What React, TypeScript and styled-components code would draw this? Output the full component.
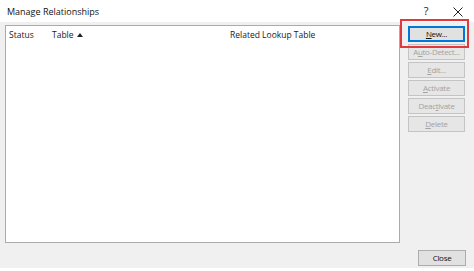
import React from "react";
import styled, { createGlobalStyle } from "styled-components";

const GlobalStyle = createGlobalStyle`
  html, body {
    margin: 0;
    padding: 0;
    background: #fff;
  }
  #root {
    width: 474px;
    height: 271px;
    overflow: hidden;
  }
  * {
    box-sizing: border-box;
  }
`;

const Dialog = styled.div`
  width: 474px;
  height: 268px;
  display: flex;
  flex-direction: column;
  font-family: "Open Sans", "Noto Sans", sans-serif;
  font-size: 8.5px;
  color: #1a1a1a;
  background: #f0f0f0;
`;

const TitleBar = styled.div`
  height: 22px;
  flex: none;
  display: flex;
  align-items: center;
  padding: 0 0 0 7px;
  background: #fff;
`;

const Title = styled.div`
  flex: 1;
  font-size: 9px;
  color: #111;
`;

const TitleButton = styled.div`
  width: 32px;
  text-align: center;
  font-size: 11px;
  color: #222;
  line-height: 22px;
`;

const Body = styled.div`
  flex: 1;
  display: grid;
  grid-template-columns: 395px 1fr;
  padding: 3px 0 2px 5px;
`;

const ListBox = styled.div`
  height: 218px;
  background: #fff;
  border: 1px solid #ababab;
`;

const HeaderRow = styled.div`
  display: grid;
  grid-template-columns: 43px 178px 1fr;
  height: 17px;
  align-items: center;
  padding-left: 3px;
`;

const HeaderCell = styled.div`
  display: flex;
  align-items: center;
  gap: 3px;
  white-space: nowrap;
`;

const SideColumn = styled.div`
  display: flex;
  flex-direction: column;
  align-items: flex-start;
  padding: 1px 0 0 8px;
`;

const ButtonStack = styled.div`
  display: flex;
  flex-direction: column;
  gap: 2px;
`;

const HighlightWrap = styled.div`
  position: relative;
`;

const Highlight = styled.div`
  position: absolute;
  left: -8px;
  top: -7px;
  width: 69px;
  height: 29px;
  border: 2px solid #e0393e;
  pointer-events: none;
  z-index: 2;
`;

const Button = styled.button<{ $primary?: boolean }>`
  width: 57px;
  height: 16px;
  padding: 0;
  margin: 0;
  font-family: inherit;
  font-size: 8px;
  letter-spacing: -0.3px;
  line-height: 1;
  white-space: nowrap;
  overflow: hidden;
  background: ${(p) => (p.$primary ? "#e1e1e1" : "#e6e6e6")};
  border: 1px solid ${(p) => (p.$primary ? "#0078d7" : "#c4c4c4")};
  color: ${(p) => (p.disabled ? "#a3a3a3" : "#111")};
  box-shadow: ${(p) => (p.$primary ? "inset 0 0 0 1px #0078d7" : "none")};
`;

const CloseButton = styled(Button)`
  margin-top: auto;
  margin-left: 10px;
  width: 48px;
  background: #e1e1e1;
  border-color: #adadad;
`;

const Key = styled.span`
  text-decoration: underline;
`;

function SortArrow() {
  return (
    <svg width="6" height="4" viewBox="0 0 6 4">
      <path d="M0 4 L3 0 L6 4 Z" fill="#222" />
    </svg>
  );
}

function CloseIcon() {
  return (
    <svg width="10" height="10" viewBox="0 0 10 10" style={{ verticalAlign: "middle" }}>
      <path d="M0.5 0.5 L9.5 9.5 M9.5 0.5 L0.5 9.5" stroke="#222" strokeWidth="1" />
    </svg>
  );
}

export default function App() {
  return (
    <>
      <GlobalStyle />
      <Dialog>
        <TitleBar>
          <Title>Manage Relationships</Title>
          <TitleButton>?</TitleButton>
          <TitleButton>
            <CloseIcon />
          </TitleButton>
        </TitleBar>
        <Body>
          <ListBox>
            <HeaderRow>
              <HeaderCell>Status</HeaderCell>
              <HeaderCell>
                Table <SortArrow />
              </HeaderCell>
              <HeaderCell>Related Lookup Table</HeaderCell>
            </HeaderRow>
          </ListBox>
          <SideColumn>
            <ButtonStack>
              <HighlightWrap>
                <Button $primary>
                  <Key>N</Key>ew...
                </Button>
                <Highlight />
              </HighlightWrap>
              <Button disabled>
                A<Key>u</Key>to-Detect...
              </Button>
              <Button disabled>
                <Key>E</Key>dit...
              </Button>
              <Button disabled>
                <Key>A</Key>ctivate
              </Button>
              <Button disabled>
                Deac<Key>t</Key>ivate
              </Button>
              <Button disabled>
                <Key>D</Key>elete
              </Button>
            </ButtonStack>
            <CloseButton>Close</CloseButton>
          </SideColumn>
        </Body>
      </Dialog>
    </>
  );
}
